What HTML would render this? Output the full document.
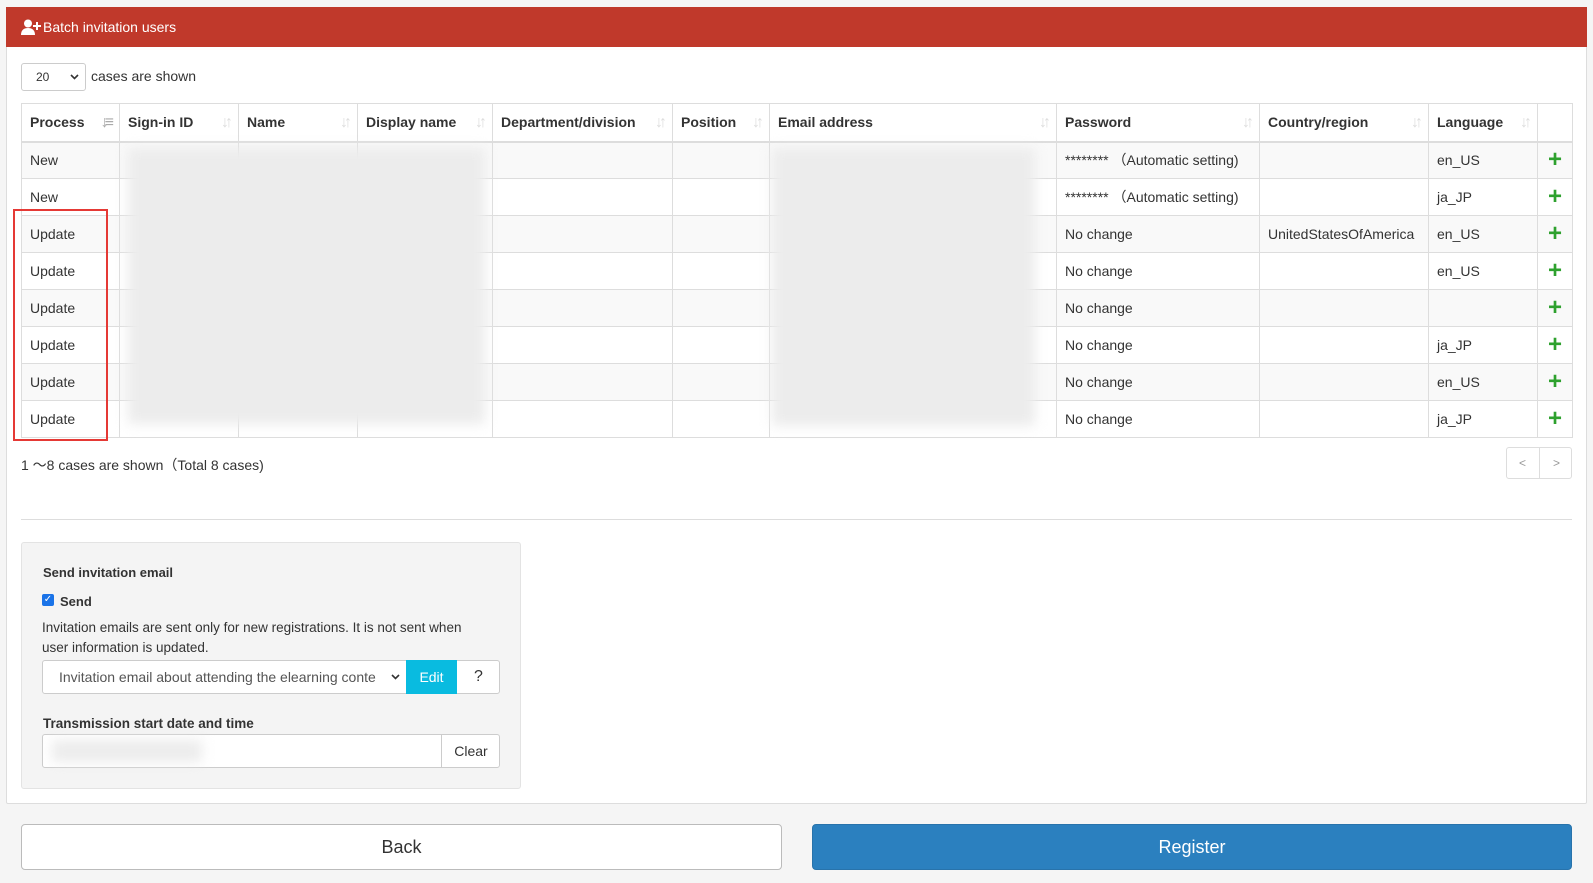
<!DOCTYPE html>
<html><head><meta charset="utf-8"><style>
*{box-sizing:border-box;margin:0;padding:0}
body{width:1593px;height:883px;background:#f5f5f5;font-family:"Liberation Sans",sans-serif;font-size:14px;color:#333;position:relative;overflow:hidden}
.card{position:absolute;left:6px;top:7px;width:1581px;height:797px;background:#fff;border:1px solid #ddd;border-radius:2px}
.hd{position:absolute;left:6px;top:7px;width:1581px;height:40px;background:#c0392b;color:#fff;font-size:14px;line-height:40px;padding-left:37px}
.abs{position:absolute}
table{position:absolute;left:21px;top:103px;border-collapse:collapse;table-layout:fixed;width:1551px}
th,td{border:1px solid #ddd;text-align:left;padding:0 8px;white-space:nowrap;overflow:hidden}
th{height:38px;font-weight:bold;border-bottom:2px solid #ddd;position:relative}
td{height:37px}
tbody tr:nth-child(odd){background:#f9f9f9}
th i{position:absolute;right:9px;top:10px;color:#ddd;font-style:normal;font-size:16px;font-weight:bold;letter-spacing:-4px}
.plus{color:#2ea12e;font-weight:bold;font-size:24px;text-align:center;padding:0}
.blur{position:absolute;background:#ececec;filter:blur(6px)}
.btn{position:absolute;border:1px solid #bbb;border-radius:4px;text-align:center;font-size:18px}
</style></head><body>
<div class="card"></div>
<div class="hd"><svg class="abs" style="left:15px;top:12px" width="20" height="16" viewBox="0 0 20 16"><circle cx="7" cy="4.5" r="4" fill="#fff"/><path d="M0 16c0-5 3-7 7-7s7 2 7 7z" fill="#fff"/><path d="M16 3v8M12 7h8" stroke="#fff" stroke-width="2"/></svg>Batch invitation users</div>
<div class="abs" style="left:21px;top:63px;width:65px;height:28px;border:1px solid #ccc;border-radius:3px;font-size:12px;line-height:26px;padding-left:14px">20<svg class="abs" style="right:6px;top:10px" width="9" height="6" viewBox="0 0 9 6"><path d="M1 1l3.5 3.5L8 1" stroke="#333" stroke-width="1.6" fill="none"/></svg></div>
<div class="abs" style="left:91px;top:68px">cases are shown</div>
<table>
<colgroup><col style="width:98px"><col style="width:119px"><col style="width:119px"><col style="width:135px"><col style="width:180px"><col style="width:97px"><col style="width:287px"><col style="width:203px"><col style="width:169px"><col style="width:109px"><col style="width:35px"></colgroup>
<thead><tr><th>Process<i style="color:#aaa">↓≡</i></th><th>Sign-in ID<i>↓↑</i></th><th>Name<i>↓↑</i></th><th>Display name<i>↓↑</i></th><th>Department/division<i>↓↑</i></th><th>Position<i>↓↑</i></th><th>Email address<i>↓↑</i></th><th>Password<i>↓↑</i></th><th>Country/region<i>↓↑</i></th><th>Language<i>↓↑</i></th><th></th></tr></thead>
<tbody>
<tr><td>New</td><td></td><td></td><td></td><td></td><td></td><td></td><td>******** （Automatic setting)</td><td></td><td>en_US</td><td class="plus">+</td></tr>
<tr><td>New</td><td></td><td></td><td></td><td></td><td></td><td></td><td>******** （Automatic setting)</td><td></td><td>ja_JP</td><td class="plus">+</td></tr>
<tr><td>Update</td><td></td><td></td><td></td><td></td><td></td><td></td><td>No change</td><td>UnitedStatesOfAmerica</td><td>en_US</td><td class="plus">+</td></tr>
<tr><td>Update</td><td></td><td></td><td></td><td></td><td></td><td></td><td>No change</td><td></td><td>en_US</td><td class="plus">+</td></tr>
<tr><td>Update</td><td></td><td></td><td></td><td></td><td></td><td></td><td>No change</td><td></td><td></td><td class="plus">+</td></tr>
<tr><td>Update</td><td></td><td></td><td></td><td></td><td></td><td></td><td>No change</td><td></td><td>ja_JP</td><td class="plus">+</td></tr>
<tr><td>Update</td><td></td><td></td><td></td><td></td><td></td><td></td><td>No change</td><td></td><td>en_US</td><td class="plus">+</td></tr>
<tr><td>Update</td><td></td><td></td><td></td><td></td><td></td><td></td><td>No change</td><td></td><td>ja_JP</td><td class="plus">+</td></tr>
</tbody></table>
<div class="blur" style="left:128px;top:148px;width:357px;height:276px"></div>
<div class="blur" style="left:772px;top:148px;width:263px;height:278px"></div>
<div class="abs" style="left:13px;top:209px;width:95px;height:232px;border:2px solid #e53935"></div>
<div class="abs" style="left:21px;top:455px">1 ～8 cases are shown（Total 8 cases)</div>
<div class="abs" style="left:1506px;top:447px;width:66px;height:32px;border:1px solid #ddd;border-radius:3px;color:#999;font-size:12px;line-height:30px"><span style="position:absolute;left:12px">&lt;</span><span style="position:absolute;left:32px;top:0;bottom:0;border-left:1px solid #ddd"></span><span style="position:absolute;left:46px">&gt;</span></div>
<div class="abs" style="left:21px;top:519px;width:1551px;border-top:1px solid #ddd"></div>
<div class="abs" style="left:21px;top:542px;width:500px;height:247px;background:#f4f4f4;border:1px solid #e3e3e3;border-radius:3px"></div>
<div class="abs" style="left:43px;top:565px;font-weight:bold;font-size:13px">Send invitation email</div>
<div class="abs" style="left:42px;top:594px;width:12px;height:12px;background:#1a73e8;border-radius:2px;color:#fff;font-size:10px;line-height:12px;text-align:center">✓</div>
<div class="abs" style="left:60px;top:594px;font-weight:bold;font-size:13px">Send</div>
<div class="abs" style="left:42px;top:618px;font-size:13.5px;line-height:20px;width:440px">Invitation emails are sent only for new registrations. It is not sent when user information is updated.</div>
<div class="abs" style="left:42px;top:660px;width:458px;height:34px;border:1px solid #ccc;border-radius:3px;background:#fff"></div>
<div class="abs" style="left:59px;top:669px;color:#555">Invitation email about attending the elearning conte</div>
<svg class="abs" style="left:391px;top:674px" width="9" height="6" viewBox="0 0 9 6"><path d="M1 1l3.5 3.5L8 1" stroke="#333" stroke-width="1.6" fill="none"/></svg>
<div class="abs" style="left:406px;top:660px;width:51px;height:34px;background:#09bbe0;color:#fff;text-align:center;line-height:34px">Edit</div>
<div class="abs" style="left:457px;top:660px;width:43px;height:34px;text-align:center;line-height:34px;font-size:16px">?</div>
<div class="abs" style="left:43px;top:716px;font-weight:bold;font-size:13.5px">Transmission start date and time</div>
<div class="abs" style="left:42px;top:734px;width:458px;height:34px;border:1px solid #ccc;border-radius:3px;background:#fff"></div>
<div class="blur" style="left:52px;top:740px;width:150px;height:22px"></div>
<div class="abs" style="left:441px;top:734px;width:59px;height:34px;border-left:1px solid #ccc;text-align:center;line-height:34px">Clear</div>
<div class="btn" style="left:21px;top:824px;width:761px;height:46px;background:#fff;line-height:44px">Back</div>
<div class="btn" style="left:812px;top:824px;width:760px;height:46px;background:#2b80bf;border-color:#2873ab;color:#fff;line-height:44px">Register</div>
</body></html>
